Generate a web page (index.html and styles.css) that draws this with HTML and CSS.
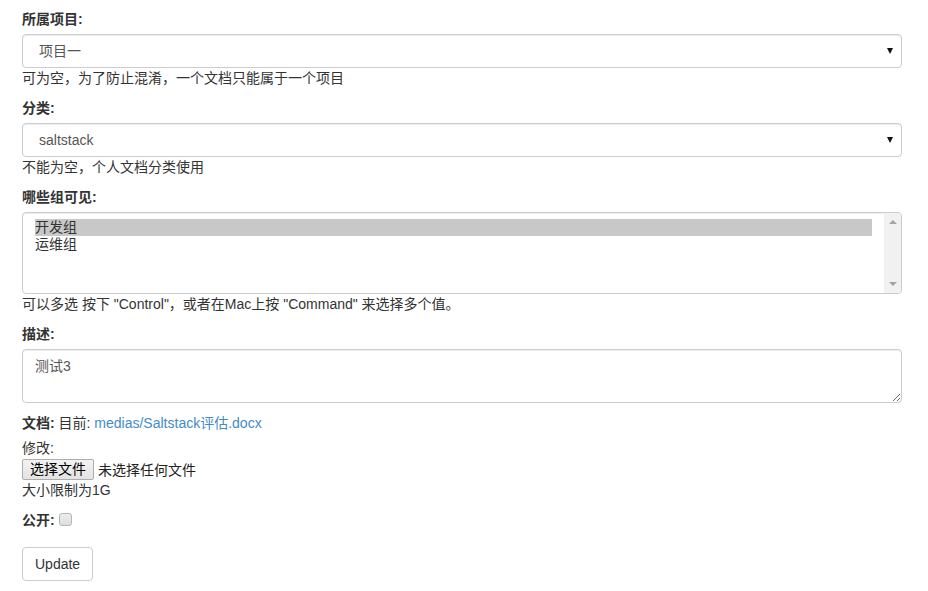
FILE: index.html
```html
<!DOCTYPE html>
<html lang="zh-CN">
<head>
    <meta charset="UTF-8">
    <title>编辑文档</title>
    <link rel="stylesheet" href="styles.css">
</head>
<body>
    <form class="doc-form">
        <div class="form-group">
            <label>所属项目:</label>
            <div class="select-wrap">
                <select class="form-control">
                    <option selected>项目一</option>
                    <option>项目二</option>
                </select>
            </div>
            <div class="help-text">可为空，为了防止混淆，一个文档只能属于一个项目</div>
        </div>

        <div class="form-group">
            <label>分类:</label>
            <div class="select-wrap">
                <select class="form-control">
                    <option selected>saltstack</option>
                </select>
            </div>
            <div class="help-text">不能为空，个人文档分类使用</div>
        </div>

        <div class="form-group">
            <label>哪些组可见:</label>
            <div class="listbox">
                <div class="listbox-options">
                    <div class="listbox-option selected">开发组</div>
                    <div class="listbox-option">运维组</div>
                </div>
                <div class="listbox-scroll">
                    <span class="arrow-up"></span>
                    <span class="arrow-down"></span>
                </div>
            </div>
            <div class="help-text">可以多选 按下 "Control"，或者在Mac上按 "Command" 来选择多个值。</div>
        </div>

        <div class="form-group">
            <label>描述:</label>
            <textarea class="form-control description">测试3</textarea>
        </div>

        <div class="form-group">
            <label>文档:</label> 目前: <a href="#" class="file-link">medias/Saltstack评估.docx</a><br>
            修改:
            <div class="file-row">
                <button type="button" class="file-button">选择文件</button>
                <span class="file-name">未选择任何文件</span>
            </div>
            <div class="help-text">大小限制为1G</div>
        </div>

        <div class="form-group checkbox-group">
            <label>公开:</label>
            <input type="checkbox" class="public-check">
        </div>

        <button type="button" class="btn-default">Update</button>
    </form>
</body>
</html>
```

FILE: styles.css
```css
* {
    box-sizing: border-box;
}

body {
    margin: 0;
    padding: 0;
    background-color: #ffffff;
    font-family: "Liberation Sans", "Noto Sans CJK SC", sans-serif;
    font-size: 14px;
    line-height: 20px;
    color: #333333;
}

.doc-form {
    padding: 9px 26px 0 22px;
}

.form-group {
    margin-bottom: 10px;
}

label {
    display: inline-block;
    margin-bottom: 5px;
    font-weight: 700;
}

.form-control {
    display: block;
    width: 100%;
    height: 34px;
    padding: 6px 12px;
    font-family: inherit;
    font-size: 14px;
    line-height: 20px;
    color: #555555;
    background-color: #ffffff;
    border: 1px solid #cccccc;
    border-radius: 4px;
    box-shadow: inset 0 1px 1px rgba(0, 0, 0, 0.075);
}

/* dropdowns */
.select-wrap {
    position: relative;
}

.select-wrap select {
    appearance: none;
    -webkit-appearance: none;
    padding-left: 16px;
}

.select-wrap::after {
    content: "";
    position: absolute;
    right: 9px;
    top: 14px;
    border-left: 3.5px solid transparent;
    border-right: 3.5px solid transparent;
    border-top: 6px solid #111111;
    pointer-events: none;
}

.help-text {
    color: #333333;
}

/* multi-select list */
.listbox {
    display: flex;
    height: 82px;
    border: 1px solid #cccccc;
    border-radius: 4px;
    box-shadow: inset 0 1px 1px rgba(0, 0, 0, 0.075);
    overflow: hidden;
}

.listbox-options {
    flex: 1;
    padding: 6px 12px;
}

.listbox-option {
    height: 17px;
    line-height: 17px;
    color: #333333;
}

.listbox-option.selected {
    background-color: #c8c8c8;
}

.listbox-scroll {
    display: flex;
    flex-direction: column;
    justify-content: space-between;
    align-items: center;
    width: 17px;
    padding: 7px 0 7px;
    background-color: #f1f1f1;
}

.arrow-up {
    border-left: 4px solid transparent;
    border-right: 4px solid transparent;
    border-bottom: 4px solid #a3a3a3;
}

.arrow-down {
    border-left: 4px solid transparent;
    border-right: 4px solid transparent;
    border-top: 4px solid #a3a3a3;
}

.description {
    height: 54px;
    resize: vertical;
}

/* file field */
.file-link {
    color: #428bca;
    text-decoration: none;
}

.file-row {
    display: flex;
    align-items: center;
    margin-top: 1px;
    height: 21px;
}

.file-button {
    height: 21px;
    padding: 0 7px;
    font-family: inherit;
    font-size: 14px;
    line-height: 17px;
    color: #000000;
    background: linear-gradient(#f2f2f2, #e3e3e3);
    border: 1px solid #adadad;
    border-radius: 2px;
}

.file-name {
    margin-left: 4px;
    color: #222222;
}

.checkbox-group {
    margin-bottom: 12px;
}

.public-check {
    appearance: none;
    -webkit-appearance: none;
    width: 13px;
    height: 13px;
    margin: 0;
    vertical-align: -1px;
    background: linear-gradient(#ededed, #dedede);
    border: 1px solid #b5b5b5;
    border-radius: 3px;
}

.btn-default {
    height: 34px;
    padding: 6px 12px;
    font-family: inherit;
    font-size: 14px;
    line-height: 20px;
    color: #333333;
    background-color: #ffffff;
    border: 1px solid #cccccc;
    border-radius: 4px;
    cursor: pointer;
}
```
